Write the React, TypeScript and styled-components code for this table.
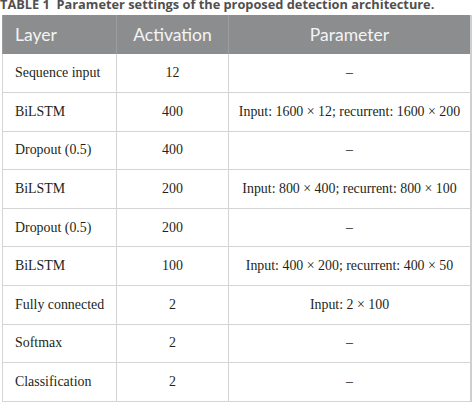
import styled, { createGlobalStyle } from 'styled-components'

const rows = [
  { layer: 'Sequence input', activation: '12', parameter: '–' },
  { layer: 'BiLSTM', activation: '400', parameter: 'Input: 1600 × 12; recurrent: 1600 × 200' },
  { layer: 'Dropout (0.5)', activation: '400', parameter: '–' },
  { layer: 'BiLSTM', activation: '200', parameter: 'Input: 800 × 400; recurrent: 800 × 100' },
  { layer: 'Dropout (0.5)', activation: '200', parameter: '–' },
  { layer: 'BiLSTM', activation: '100', parameter: 'Input: 400 × 200; recurrent: 400 × 50' },
  { layer: 'Fully connected', activation: '2', parameter: 'Input: 2 × 100' },
  { layer: 'Softmax', activation: '2', parameter: '–' },
  { layer: 'Classification', activation: '2', parameter: '–' },
]

export default function App() {
  return (
    <>
      <GlobalStyle />
      <Page>
        <Caption>
          <CaptionText>
            TABLE 1&nbsp;&nbsp;Parameter settings of the proposed detection architecture.
          </CaptionText>
        </Caption>
        <Table>
          <colgroup>
            <col style={{ width: 114 }} />
            <col style={{ width: 112 }} />
            <col />
          </colgroup>
          <thead>
            <tr>
              <Th $align="left">Layer</Th>
              <Th>Activation</Th>
              <Th>Parameter</Th>
            </tr>
          </thead>
          <tbody>
            {rows.map((r, i) => (
              <Row key={i}>
                <Td $align="left">{r.layer}</Td>
                <Td>{r.activation}</Td>
                <Td>{r.parameter}</Td>
              </Row>
            ))}
          </tbody>
        </Table>
      </Page>
    </>
  )
}

const GlobalStyle = createGlobalStyle`
  html, body {
    margin: 0;
    padding: 0;
    background: #fff;
  }
`

const Page = styled.div`
  width: 474px;
  height: 402px;
  overflow: hidden;
  background: #fff;
`

const Caption = styled.div`
  height: 15px;
  overflow: hidden;
  white-space: nowrap;
`

const CaptionText = styled.div`
  margin-top: -3px;
  font-family: 'Open Sans', sans-serif;
  font-weight: 700;
  font-size: 12.8px;
  line-height: 14px;
  color: #505050;
`

const Table = styled.table`
  margin-left: 2px;
  width: 470px;
  border-collapse: collapse;
  table-layout: fixed;
  border-left: 1px solid #d6d6d6;
  border-right: 2px solid #cfcfcf;
`

const Th = styled.th<{ $align?: string }>`
  height: 39px;
  padding: 0 ${(p) => (p.$align ? '0' : '8px')} 0 ${(p) => (p.$align ? '12px' : '8px')};
  background: #8b8d8f;
  color: #f4f4f4;
  font-family: Lato, 'Open Sans', sans-serif;
  font-weight: 400;
  font-size: 17.5px;
  text-align: ${(p) => p.$align || 'center'};
  border-left: 1px solid #9c9ea0;
`

const Row = styled.tr`
  height: 38.6px;
`

const Td = styled.td<{ $align?: string }>`
  padding: 0 ${(p) => (p.$align ? '0' : '6px')} 0 ${(p) => (p.$align ? '12px' : '6px')};
  font-family: 'Liberation Serif', 'Times New Roman', serif;
  font-size: 13.9px;
  color: #231f20;
  text-align: ${(p) => p.$align || 'center'};
  border: 1px solid #d4d4d4;
  border-top: 0;
  white-space: nowrap;
`
